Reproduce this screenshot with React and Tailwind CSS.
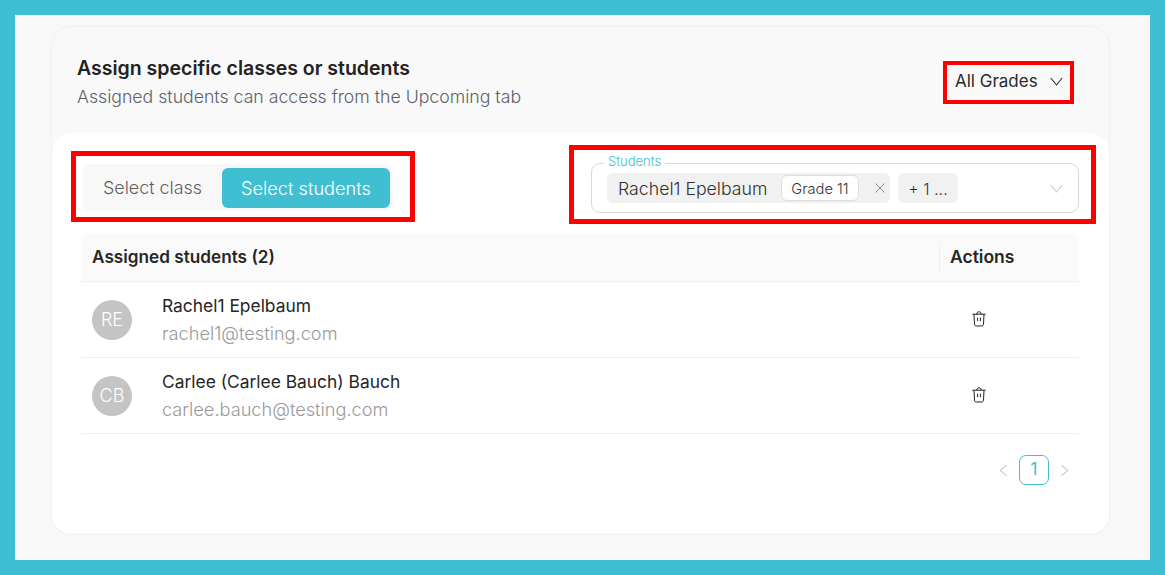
const Chevron = ({ className }) => (
  <svg viewBox="0 0 13 9" fill="none" stroke="currentColor" strokeWidth="1.1" className={className}>
    <path d="M0.8 1 L6.5 8 L12.2 1" />
  </svg>
);

const Trash = () => (
  <svg viewBox="0 0 14 16" width="14" height="16" fill="none" stroke="#222" strokeWidth="1" strokeLinecap="round" strokeLinejoin="round">
    <path d="M0.8 3.2 H13.2" />
    <path d="M4.8 3 C4.8 1.4 5.6 0.8 7 0.8 C8.4 0.8 9.2 1.4 9.2 3" />
    <path d="M2 3.4 L2.5 13 C2.6 14.4 3.4 15 4.4 15 H9.6 C10.6 15 11.4 14.4 11.5 13 L12 3.4" />
    <path d="M5.6 7 V9.8 M8.4 7 V9.8" />
  </svg>
);

const Row = ({ initials, name, email }) => (
  <div className="flex h-[76px] items-center border-b border-[#efefef]">
    <div className="flex w-[858px] items-center pl-[11px]">
      <div className="flex h-10 w-10 items-center justify-center rounded-full bg-[#c4c4c4] text-[18px] font-light text-white">{initials}</div>
      <div className="ml-[30px] flex flex-col">
        <span className="text-[17.4px] leading-[26px] text-[#262626]">{name}</span>
        <span className="mt-[1px] text-[18.2px] font-light leading-[26px] text-[#9a9a9a]">{email}</span>
      </div>
    </div>
    <div className="flex w-[80px] justify-center pb-[2px]"><Trash /></div>
  </div>
);

export default function App() {
  return (
    <div className="h-[575px] w-[1165px] overflow-hidden bg-[#40bfd2] p-[15px] font-['Inter',sans-serif]">
      <div className="h-[545px] w-[1135px] bg-[#f8f8f8] pl-[36px] pt-[11px]">
        <div className="flex h-[509px] w-[1059px] flex-col rounded-[20px] border border-[#f0f0f0] bg-[#f9f9f9]">
          <div className="flex h-[106px] shrink-0 justify-between pl-[25px] pr-[35px]">
            <div className="pt-[27px]">
              <h2 className="text-[19.5px] font-semibold leading-[28px] text-[#222222]">Assign specific classes or students</h2>
              <p className="mt-[2px] text-[17.7px] font-light leading-[26px] text-[#5f5f6c]">Assigned students can access from the Upcoming tab</p>
            </div>
            <div className="mt-[34px] flex h-[43px] w-[131px] items-center border-4 border-[#ff0000] pb-[2px] pl-2 text-[17px] text-[#2a2a2a]">
              <span>All Grades</span>
              <Chevron className="ml-auto mr-[7px] h-[9px] w-[13px]" />
            </div>
          </div>
          <div className="flex-1 rounded-[20px] bg-white">
            <div className="flex items-start justify-between pl-[19px] pr-[13px] pt-[12px]">
              <div className="mt-[6px] flex h-[71px] w-[344px] items-center border-[5px] border-[#ff0000] pl-[6px] pt-[2px]">
                <div className="flex h-[47px] w-[311px] items-center rounded-[8px] bg-[#f8f8f8] pl-[21px] pr-[3px]">
                  <span className="pt-[2px] text-[17.9px] font-light text-[#5f5f5f]">Select class</span>
                  <span className="ml-auto flex h-[40px] w-[168px] items-center justify-center rounded-[6px] bg-[#40bfd2] pt-[2px] text-[18.2px] font-light text-white">Select students</span>
                </div>
              </div>
              <div className="flex h-[79px] w-[527px] items-center border-[5px] border-[#ff0000] pl-[17px] pt-[7px]">
                <div className="relative flex h-[50px] w-[488px] items-center rounded-[9px] border border-[#d9d9d9] pl-[15px]">
                  <span className="absolute -top-[11px] left-[12px] bg-white px-[4px] text-[13px] font-light leading-[16px] text-[#40bfd2]">Students</span>
                  <div className="flex h-[30px] w-[283px] items-center rounded-[6px] bg-[#f1f1f1] pl-[11px] text-[#333333]">
                    <span className="pt-[2px] text-[17.7px] font-light">Rachel1 Epelbaum</span>
                    <span className="ml-auto flex h-[26px] w-[78px] items-center justify-center rounded-[6px] border border-[#dcdcdc] bg-white pt-[2px] text-[14.7px] font-light text-[#333333]">Grade 11</span>
                    <svg viewBox="0 0 10 10" width="10" height="10" fill="none" stroke="#8c8c8c" strokeWidth="1" className="ml-[16px] mr-[5px]">
                      <path d="M0.5 0.5 L9.5 9.5 M9.5 0.5 L0.5 9.5" />
                    </svg>
                  </div>
                  <div className="ml-[8px] flex h-[30px] w-[60px] items-center justify-center rounded-[6px] bg-[#f1f1f1] pt-[1px] text-[16px] font-light text-[#333333]">+ 1 ...</div>
                  <Chevron className="ml-auto mr-[15px] h-[9px] w-[13px] text-[#c8c8c8]" />
                </div>
              </div>
            </div>
            <div className="mx-[29px] mt-[9px] w-[998px]">
              <div className="flex h-[49px] items-center rounded-t-[10px] border-b border-[#efefef] bg-[#fafafa] font-semibold text-[#262626]">
                <span className="w-[858px] pl-[11px] text-[17.2px]">Assigned students (2)</span>
                <span className="border-l border-[#efefef] pl-[10px] text-[17.5px] leading-[30px]">Actions</span>
              </div>
              <Row initials="RE" name="Rachel1 Epelbaum" email="rachel1@testing.com" />
              <Row initials="CB" name="Carlee (Carlee Bauch) Bauch" email="carlee.bauch@testing.com" />
              <div className="mt-[21px] flex items-center justify-end pr-[10px]">
                <svg viewBox="0 0 8 12" width="9" height="13" fill="none" stroke="#c8c8c8" strokeWidth="1"><path d="M7 1 L1 6 L7 11" /></svg>
                <div className="mx-[11px] flex h-[30px] w-[30px] items-center justify-center rounded-[7px] border border-[#40bfd2] text-[17px] text-[#40bfd2]">1</div>
                <svg viewBox="0 0 8 12" width="9" height="13" fill="none" stroke="#c8c8c8" strokeWidth="1"><path d="M1 1 L7 6 L1 11" /></svg>
              </div>
            </div>
          </div>
        </div>
      </div>
    </div>
  );
}
